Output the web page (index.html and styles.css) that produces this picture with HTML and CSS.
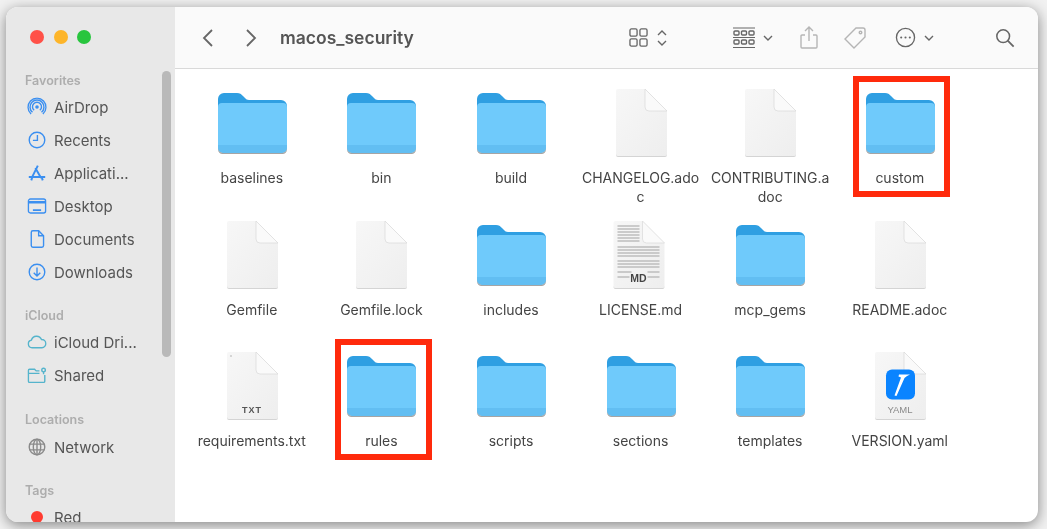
FILE: index.html
```html
<!DOCTYPE html>
<html lang="en">
<head>
  <meta charset="utf-8">
  <title>macos_security</title>
  <link rel="stylesheet" href="styles.css">
</head>
<body>
  <svg class="defs" width="0" height="0">
    <defs>
      <linearGradient id="pageFill" x1="0" y1="0" x2="1" y2="1">
        <stop offset="0" stop-color="#f7f7f7"/>
        <stop offset="1" stop-color="#eeeeee"/>
      </linearGradient>
      <symbol id="folder" viewBox="0 0 74 74">
        <path d="M3 14a6 6 0 0 1 6-6h13c3 0 4 1 6 3l2 2c1 1 2 2 4 2h32a6 6 0 0 1 6 6v40a5 5 0 0 1-5 5H8a5 5 0 0 1-5-5z" fill="#2f9fe2"/>
        <path d="M3 22a4 4 0 0 1 4-4h61a4 4 0 0 1 4 4v41a5 5 0 0 1-5 5H8a5 5 0 0 1-5-5z" fill="#6fcafb"/>
        <path d="M3 60h69v3a5 5 0 0 1-5 5H8a5 5 0 0 1-5-5z" fill="#62bef2"/>
        <path d="M3 63a5 5 0 0 0 5 5h59a5 5 0 0 0 5-5v1.500a4.500 4.500 0 0 1-4.500 4.500h-60A4.500 4.500 0 0 1 3 64.500z" fill="#a5a5a5"/>
      </symbol>
      <symbol id="page" viewBox="0 0 74 74">
        <path d="M12 6a2 2 0 0 1 2-2h27l22 22v43a2 2 0 0 1-2 2H14a2 2 0 0 1-2-2z" fill="url(#pageFill)"/>
        <path d="M12 69a2 2 0 0 0 2 2h47a2 2 0 0 0 2-2v1a2 2 0 0 1-2 2H14a2 2 0 0 1-2-2z" fill="#d4d4d4"/>
        <path d="M41 4l22 22H45a4 4 0 0 1-4-4z" fill="#fafafa" stroke="#dcdcdc" stroke-width=".8"/>
      </symbol>
    </defs>
  </svg>

  <div class="window">
    <aside class="sidebar">
      <div class="lights">
        <span class="light red"></span>
        <span class="light yellow"></span>
        <span class="light green"></span>
      </div>

      <section class="group">
        <h5>Favorites</h5>
        <div class="item">
          <svg class="side-icon blue" viewBox="0 0 24 24"><circle cx="12" cy="12" r="2.200" fill="#3b8ff0" stroke="none"/><path d="M8.500 16a5.500 5.500 0 1 1 7 0M6.500 18.500a8.500 8.500 0 1 1 11 0M4.800 20.500a11 11 0 1 1 14.400 0"/></svg>
          AirDrop
        </div>
        <div class="item">
          <svg class="side-icon blue" viewBox="0 0 24 24"><circle cx="12" cy="12" r="9.500"/><path d="M12.500 6v6.500H7"/></svg>
          Recents
        </div>
        <div class="item">
          <svg class="side-icon blue" viewBox="0 0 24 24"><path d="M13 3L6 17M10 6l7 12M2 17h20M5 21l1-3M19 21l-1-3" stroke-width="2.400"/></svg>
          Applicati...
        </div>
        <div class="item">
          <svg class="side-icon blue" viewBox="0 0 24 24"><rect x="1.500" y="3.500" width="21" height="17" rx="2.500"/><path d="M2 7.500h20" stroke-width="3"/><path d="M7 17h10" stroke-width="2"/></svg>
          Desktop
        </div>
        <div class="item">
          <svg class="side-icon blue" viewBox="0 0 24 24"><path d="M5 4a2 2 0 0 1 2-2h7l6 6v12a2 2 0 0 1-2 2H7a2 2 0 0 1-2-2z"/><path d="M14 2v6h6"/></svg>
          Documents
        </div>
        <div class="item">
          <svg class="side-icon blue" viewBox="0 0 24 24"><circle cx="12" cy="12" r="9.500"/><path d="M12 6.500v10M8 13l4 4 4-4"/></svg>
          Downloads
        </div>
      </section>

      <section class="group">
        <h5>iCloud</h5>
        <div class="item">
          <svg class="side-icon teal" viewBox="0 0 24 24"><path d="M6 19a4.700 4.700 0 0 1-.8-9.300A6.500 6.500 0 0 1 17.500 9 5 5 0 0 1 18 19z"/></svg>
          iCloud Dri...
        </div>
        <div class="item">
          <svg class="side-icon teal" viewBox="0 0 24 24"><path d="M15 7H11L9 5H3a1.500 1.500 0 0 0-1.500 1.500v13A1.500 1.500 0 0 0 3 21h17a1.500 1.500 0 0 0 1.500-1.500V12"/><path d="M2 10h13"/><circle cx="20" cy="6" r="2.200"/><path d="M20 8v3"/></svg>
          Shared
        </div>
      </section>

      <section class="group locations">
        <h5>Locations</h5>
        <div class="item">
          <svg class="side-icon grey" viewBox="0 0 24 24"><circle cx="12" cy="12" r="9.500"/><ellipse cx="12" cy="12" rx="4.500" ry="9.500"/><path d="M3 8.500h18M3 15.500h18M12 2.500v19"/></svg>
          Network
        </div>
      </section>

      <section class="group">
        <h5>Tags</h5>
        <div class="item">
          <span class="tag-dot"></span>
          Red
        </div>
      </section>

      <div class="scrollbar"></div>
    </aside>

    <div class="content">
      <header class="toolbar">
        <svg class="tool nav" viewBox="0 0 14 20"><path d="M11 2L3 10l8 8"/></svg>
        <svg class="tool nav fwd" viewBox="0 0 14 20"><path d="M3 2l8 8-8 8"/></svg>
        <h1 class="title">macos_security</h1>

        <svg class="tool view" viewBox="0 0 20 20"><rect x="1" y="1" width="7.500" height="7.500" rx="1.500"/><rect x="11.500" y="1" width="7.500" height="7.500" rx="1.500"/><rect x="1" y="11.500" width="7.500" height="7.500" rx="1.500"/><rect x="11.500" y="11.500" width="7.500" height="7.500" rx="1.500"/></svg>
        <svg class="tool updown" viewBox="0 0 12 20"><path d="M2 7l4-4 4 4M2 13l4 4 4-4"/></svg>
        <svg class="tool group-by" viewBox="0 0 22 22"><path d="M0 1h22M0 10.500h22M0 20.500h22" stroke-width="1.200"/><rect x="1" y="4" width="5" height="4" rx="1"/><rect x="8.500" y="4" width="5" height="4" rx="1"/><rect x="16" y="4" width="5" height="4" rx="1"/><rect x="1" y="13" width="5" height="4" rx="1"/><rect x="8.500" y="13" width="5" height="4" rx="1"/><rect x="16" y="13" width="5" height="4" rx="1"/></svg>
        <svg class="tool caret" viewBox="0 0 12 8"><path d="M2 2l4 4 4-4"/></svg>
        <svg class="tool share faded" viewBox="0 0 20 24"><path d="M6 9H3a1 1 0 0 0-1 1v11a1 1 0 0 0 1 1h14a1 1 0 0 0 1-1V10a1 1 0 0 0-1-1h-3M10 15V2M6 5l4-4 4 4"/></svg>
        <svg class="tool tag faded" viewBox="0 0 24 24"><path d="M13 2h7a2 2 0 0 1 2 2v7L11 22 2 13z"/><circle cx="17.500" cy="6.500" r="1.300"/></svg>
        <svg class="tool more" viewBox="0 0 22 22"><circle cx="11" cy="11" r="9.500"/><circle class="solid" cx="6.500" cy="11" r="1.100"/><circle class="solid" cx="11" cy="11" r="1.100"/><circle class="solid" cx="15.500" cy="11" r="1.100"/></svg>
        <svg class="tool caret" viewBox="0 0 12 8"><path d="M2 2l4 4 4-4"/></svg>
        <svg class="tool search" viewBox="0 0 22 22"><circle cx="9" cy="9" r="7"/><path d="M14 14l6.500 6.500" stroke-width="2"/></svg>
      </header>

      <main class="files">
        <div class="file"><svg class="file-icon"><use href="#folder"/></svg><span>baselines</span></div>
        <div class="file"><svg class="file-icon"><use href="#folder"/></svg><span>bin</span></div>
        <div class="file"><svg class="file-icon"><use href="#folder"/></svg><span>build</span></div>
        <div class="file"><svg class="file-icon"><use href="#page"/></svg><span>CHANGELOG.adoc</span></div>
        <div class="file"><svg class="file-icon"><use href="#page"/></svg><span>CONTRIBUTING.adoc</span></div>
        <div class="file marked"><svg class="file-icon"><use href="#folder"/></svg><span>custom</span></div>

        <div class="file"><svg class="file-icon"><use href="#page"/></svg><span>Gemfile</span></div>
        <div class="file"><svg class="file-icon"><use href="#page"/></svg><span>Gemfile.lock</span></div>
        <div class="file"><svg class="file-icon"><use href="#folder"/></svg><span>includes</span></div>
        <div class="file">
          <svg class="file-icon" viewBox="2.500 0 74 74">
            <use href="#page" width="74" height="74"/>
            <path class="doc-lines" d="M16 9h22M16 12h22M16 15h22M16 18h22M16 21h22M16 24h22M16 30h42M16 33h42M16 36h42M16 39h42M16 44h42M16 47h42M16 50h42M16 55h14M46 55h12M16 60h12M46 60h12"/>
            <text class="doc-mark" x="37" y="65">MD</text>
          </svg>
          <span>LICENSE.md</span>
        </div>
        <div class="file"><svg class="file-icon"><use href="#folder"/></svg><span>mcp_gems</span></div>
        <div class="file"><svg class="file-icon"><use href="#page"/></svg><span>README.adoc</span></div>

        <div class="file">
          <svg class="file-icon" viewBox="0 0 74 74">
            <use href="#page" width="74" height="74"/>
            <circle cx="16" cy="8" r=".8" fill="#aaa"/>
            <text class="doc-mark txt" x="37" y="65">TXT</text>
          </svg>
          <span>requirements.txt</span>
        </div>
        <div class="file marked"><svg class="file-icon"><use href="#folder"/></svg><span>rules</span></div>
        <div class="file"><svg class="file-icon"><use href="#folder"/></svg><span>scripts</span></div>
        <div class="file"><svg class="file-icon"><use href="#folder"/></svg><span>sections</span></div>
        <div class="file"><svg class="file-icon"><use href="#folder"/></svg><span>templates</span></div>
        <div class="file">
          <svg class="file-icon" viewBox="0 0 74 74">
            <use href="#page" width="74" height="74"/>
            <rect x="23" y="21.500" width="29" height="30" rx="6" fill="#0a84ff"/>
            <path d="M31.500 47.500L38 29.500l-2.500-1 .5-2h11c-2 1-4 2-5.500 3.500l-8 18z" fill="#fff"/>
            <text class="doc-mark yaml" x="37" y="65">YAML</text>
          </svg>
          <span>VERSION.yaml</span>
        </div>
      </main>
    </div>
  </div>
</body>
</html>
```

FILE: styles.css
```css
html, body {
  margin: 0;
  height: 100%;
  overflow: hidden;
}
body {
  background: #f1f1f1;
  font-family: "Inter", "Liberation Sans", sans-serif;
  padding: 7px 9px 7px 6px;
  box-sizing: border-box;
}
.defs {
  position: absolute;
}

.window {
  height: 515px;
  display: flex;
  background: #fff;
  border-radius: 12px;
  overflow: hidden;
  box-shadow: 0 3px 14px rgba(0, 0, 0, .45);
  filter: blur(.45px);
}

/* sidebar */
.sidebar {
  position: relative;
  width: 169px;
  flex: none;
  background: #e8e8e8;
  padding-top: 23px;
  box-sizing: border-box;
}
.lights {
  display: flex;
  gap: 9.500px;
  padding-left: 24px;
  margin-bottom: 27.500px;
}
.light {
  width: 14px;
  height: 14px;
  border-radius: 50%;
}
.light.red { background: #ff5148; }
.light.yellow { background: #fdb52a; }
.light.green { background: #28c53e; }

.group {
  margin-bottom: 18px;
}
.group h5 {
  margin: 0 0 2px 19px;
  font-size: 12.500px;
  line-height: 17px;
  font-weight: 600;
  color: #adadad;
}
.group.locations {
  margin-top: 19px;
}
.group.locations h5 {
  margin-bottom: 3px;
}
.item {
  height: 33px;
  display: flex;
  align-items: center;
  gap: 5px;
  padding-left: 19px;
  font-size: 15px;
  color: #555;
}
.side-icon {
  width: 24px;
  height: 24px;
  flex: none;
  transform: scale(.82);
  fill: none;
  stroke-width: 1.700;
}
.side-icon.blue { stroke: #3b8ff0; }
.side-icon.teal { stroke: #55b4cc; }
.side-icon.grey { stroke: #8a8a8a; }
.tag-dot {
  width: 12px;
  height: 12px;
  margin: 0 6px;
  flex: none;
  border-radius: 50%;
  background: #ff3b30;
}
.scrollbar {
  position: absolute;
  left: 156px;
  top: 64px;
  width: 9px;
  height: 286px;
  border-radius: 5px;
  background: #b9b9b9;
}

/* toolbar */
.content {
  flex: 1;
  min-width: 0;
}
.toolbar {
  height: 61px;
  display: flex;
  align-items: center;
  background: #fafafa;
  border-bottom: 1px solid #d9d9d9;
  box-sizing: content-box;
}
.title {
  margin: 0 0 0 22px;
  width: 349px;
  flex: none;
  font-size: 17.500px;
  font-weight: 600;
  color: #555;
}
.tool {
  flex: none;
  fill: none;
  stroke: #666;
  stroke-width: 1.400;
}
.tool .solid {
  fill: #666;
  stroke: none;
}
.tool.faded { stroke: #b5b5b5; }
.nav {
  width: 14px;
  height: 20px;
  margin-left: 26px;
  stroke-width: 1.800;
}
.nav.fwd { margin-left: 29px; }
.view { width: 19px; height: 19px; }
.updown { width: 12px; height: 20px; margin-left: 8px; }
.group-by { width: 22px; height: 22px; margin-left: 65px; }
.caret { width: 12px; height: 8px; margin-left: 7px; }
.share { width: 20px; height: 24px; margin-left: 25px; }
.tag { width: 24px; height: 24px; margin-left: 24px; }
.more { width: 21px; height: 21px; margin-left: 27.500px; }
.search { width: 20px; height: 20px; margin-left: 60px; stroke-width: 1.700; }

/* file grid */
.files {
  display: grid;
  grid-template-columns: repeat(6, 129.600px);
  grid-auto-rows: 131.700px;
  padding: 16px 0 0 12px;
}
.file {
  position: relative;
  display: flex;
  flex-direction: column;
  align-items: center;
  text-align: center;
  font-size: 14px;
  line-height: 19px;
  color: #444;
}
.file span {
  width: 123px;
  overflow-wrap: anywhere;
}
.file-icon {
  width: 74px;
  height: 74px;
  margin-bottom: 9px;
  flex: none;
}
.marked::after {
  content: "";
  position: absolute;
  left: 18px;
  top: -9px;
  width: 97px;
  height: 121px;
  box-sizing: border-box;
  border: 6px solid #ff2a0c;
}
.doc-lines {
  stroke: #bdbdbd;
  stroke-width: 1.300;
  fill: none;
}
.doc-mark {
  font-family: "Liberation Sans", sans-serif;
  font-size: 10.500px;
  font-weight: 700;
  text-anchor: middle;
  fill: #444;
}
.doc-mark.txt {
  letter-spacing: 1px;
  font-size: 9px;
  fill: #555;
}
.doc-mark.yaml {
  font-size: 9.500px;
  font-weight: 400;
  fill: #8a8a8a;
}
```
